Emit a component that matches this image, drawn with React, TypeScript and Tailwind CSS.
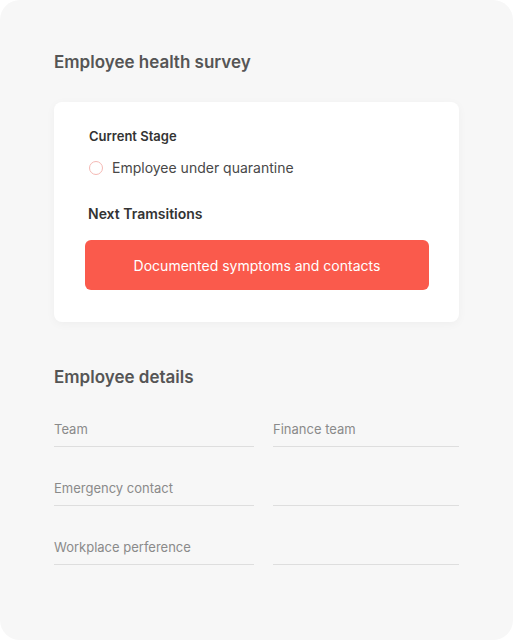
export default function App() {
  const fields = [
    { label: "Team", value: "Finance team" },
    { label: "Emergency contact", value: "" },
    { label: "Workplace perference", value: "" },
  ];

  return (
    <div className="w-[513px] h-[640px] bg-white font-['Inter',sans-serif]">
      <div className="w-full h-full bg-[#f7f7f7] rounded-[20px] px-[54px] pt-[51px]">
        <h1 className="text-[17px] leading-[22px] font-semibold text-[#555555]">Employee health survey</h1>

        <div className="mt-[29px] w-[405px] h-[220px] bg-white rounded-[8px] shadow-[0_2px_10px_rgba(0,0,0,0.04)] pl-[31px] pr-[30px] pt-[25px]">
          <div className="pl-[4px] text-[13px] leading-[18px] font-semibold text-[#333333]">Current Stage</div>
          <div className="mt-[14px] pl-[4px] flex items-center gap-[9px]">
            <span className="w-[14px] h-[14px] rounded-full border border-[#f5b9b4]" />
            <span className="text-[14px] leading-[18px] text-[#484848]">Employee under quarantine</span>
          </div>
          <div className="mt-[28px] pl-[3px] text-[14px] leading-[18px] font-semibold text-[#333333]">Next Tramsitions</div>
          <button className="mt-[17px] w-[344px] h-[50px] rounded-[6px] bg-[#fa5a4c] text-white text-[14px]">
            Documented symptoms and contacts
          </button>
        </div>

        <h2 className="mt-[44px] text-[17px] leading-[22px] font-semibold text-[#555555]">Employee details</h2>

        <div className="mt-[31px] flex flex-col gap-[31.5px]">
          {fields.map((f) => (
            <div key={f.label} className="grid grid-cols-[200px_186px] gap-[19px]">
              <div className="border-b-[1.5px] border-[#dedede] pb-[6px] text-[13px] leading-[20px] text-[#8a8a8a]">{f.label}</div>
              <div className="border-b-[1.5px] border-[#dedede] pb-[6px] text-[13px] leading-[20px] text-[#8a8a8a] h-[27.5px]">{f.value}</div>
            </div>
          ))}
        </div>
      </div>
    </div>
  );
}
